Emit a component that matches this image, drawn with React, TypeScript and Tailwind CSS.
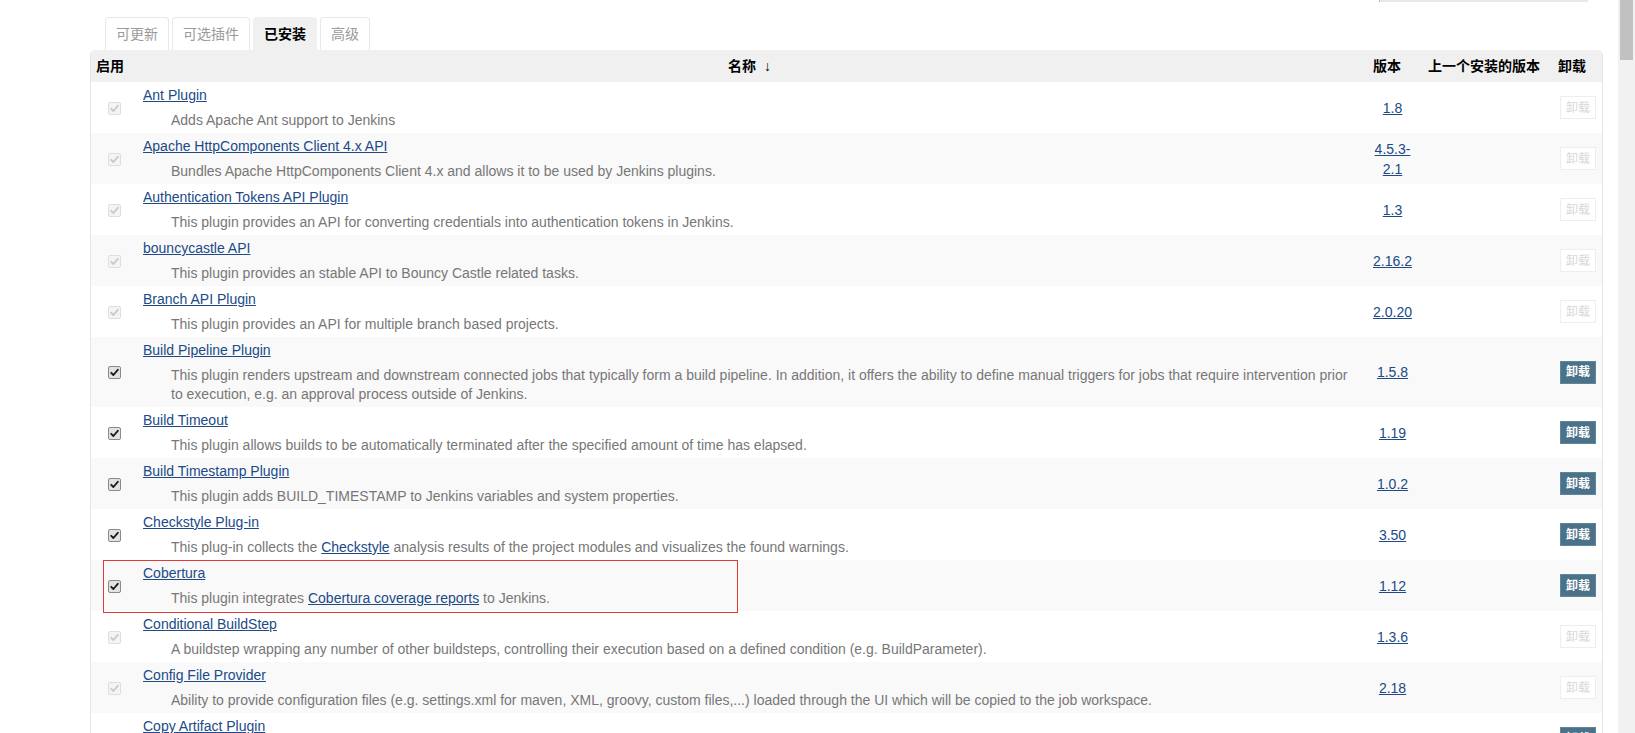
import React from "react";

type Plugin = {
  name: string;
  desc: React.ReactNode;
  version: string;
  active: boolean;
  marked?: boolean;
};

const Lnk = ({ children }: { children: React.ReactNode }) => (
  <a href="#" className="text-[#204a87] underline">
    {children}
  </a>
);

const plugins: Plugin[] = [
  { name: "Ant Plugin", desc: "Adds Apache Ant support to Jenkins", version: "1.8", active: false },
  {
    name: "Apache HttpComponents Client 4.x API",
    desc: "Bundles Apache HttpComponents Client 4.x and allows it to be used by Jenkins plugins.",
    version: "4.5.3-2.1",
    active: false,
  },
  {
    name: "Authentication Tokens API Plugin",
    desc: "This plugin provides an API for converting credentials into authentication tokens in Jenkins.",
    version: "1.3",
    active: false,
  },
  {
    name: "bouncycastle API",
    desc: "This plugin provides an stable API to Bouncy Castle related tasks.",
    version: "2.16.2",
    active: false,
  },
  {
    name: "Branch API Plugin",
    desc: "This plugin provides an API for multiple branch based projects.",
    version: "2.0.20",
    active: false,
  },
  {
    name: "Build Pipeline Plugin",
    desc: "This plugin renders upstream and downstream connected jobs that typically form a build pipeline. In addition, it offers the ability to define manual triggers for jobs that require intervention prior to execution, e.g. an approval process outside of Jenkins.",
    version: "1.5.8",
    active: true,
  },
  {
    name: "Build Timeout",
    desc: "This plugin allows builds to be automatically terminated after the specified amount of time has elapsed.",
    version: "1.19",
    active: true,
  },
  {
    name: "Build Timestamp Plugin",
    desc: "This plugin adds BUILD_TIMESTAMP to Jenkins variables and system properties.",
    version: "1.0.2",
    active: true,
  },
  {
    name: "Checkstyle Plug-in",
    desc: (
      <>
        This plug-in collects the <Lnk>Checkstyle</Lnk> analysis results of the project modules and visualizes the found warnings.
      </>
    ),
    version: "3.50",
    active: true,
  },
  {
    name: "Cobertura",
    desc: (
      <>
        This plugin integrates <Lnk>Cobertura coverage reports</Lnk> to Jenkins.
      </>
    ),
    version: "1.12",
    active: true,
    marked: true,
  },
  {
    name: "Conditional BuildStep",
    desc: "A buildstep wrapping any number of other buildsteps, controlling their execution based on a defined condition (e.g. BuildParameter).",
    version: "1.3.6",
    active: false,
  },
  {
    name: "Config File Provider",
    desc: "Ability to provide configuration files (e.g. settings.xml for maven, XML, groovy, custom files,...) loaded through the UI which will be copied to the job workspace.",
    version: "2.18",
    active: false,
  },
  {
    name: "Copy Artifact Plugin",
    desc: "Adds a build step to copy artifacts from another project.",
    version: "1.39",
    active: true,
  },
];

function CheckBox({ active }: { active: boolean }) {
  return (
    <span
      className={`inline-flex w-[13px] h-[13px] items-center justify-center rounded-[2px] border align-middle ${
        active ? "border-[#8a8a8a] bg-[#e2e2e2]" : "border-[#dedede] bg-[#f4f4f4]"
      }`}
    >
      <svg width="9" height="9" viewBox="0 0 9 9">
        <path
          d="M1.2 4.8 L3.4 7 L7.8 1.8"
          fill="none"
          stroke={active ? "#1a1a1a" : "#c9c9c9"}
          strokeWidth="1.8"
          strokeLinecap="round"
          strokeLinejoin="round"
        />
      </svg>
    </span>
  );
}

function UninstallButton({ active }: { active: boolean }) {
  return (
    <span
      className={`inline-flex w-[36px] h-[23px] items-center justify-center border text-[12px] align-middle ${
        active ? "bg-[#4b7288] border-[#5f879c] text-white font-bold" : "bg-white border-[#eeeeee] text-[#d8d8d8]"
      }`}
    >
      卸载
    </span>
  );
}

const tabs = ["可更新", "可选插件", "已安装", "高级"];

export default function App() {
  return (
    <div className="flex h-screen w-full overflow-hidden bg-white text-[14px] text-black font-['Liberation_Sans',Arial,'Noto_Sans_CJK_SC',sans-serif]">
      <div className="flex-1 min-w-0">
        {/* bottom edge of the filter box, scrolled off */}
        <div className="flex justify-end pr-[30px]">
          <div className="w-[209px] h-[2px] bg-[#e8e8e8] border-l border-[#bdbdbd]" />
        </div>

        <div className="flex gap-[3px] pl-[105px] mt-[15px]">
          {tabs.map((t, i) => (
            <div
              key={t}
              className={`h-[33px] px-[10px] flex items-center rounded-t-[4px] border border-b-0 ${
                i === 2 ? "bg-[#f0f0f0] border-[#f0f0f0] font-bold text-black" : "bg-white border-[#e8e8e8] text-[#9a9a9a]"
              }`}
            >
              {t}
            </div>
          ))}
        </div>

        <div className="ml-[90px] w-[1513px] border-x border-[#e6e6e6] rounded-t-[5px] overflow-hidden">
          <table className="table-fixed w-full border-collapse">
            <colgroup>
              <col className="w-[46px]" />
              <col className="w-[1225px]" />
              <col className="w-[61px]" />
              <col className="w-[129px]" />
              <col className="w-[50px]" />
            </colgroup>
            <thead>
              <tr className="bg-[#f0f0f0] h-[32px] font-bold">
                <th className="text-left pl-[5px] font-bold">启用</th>
                <th className="text-center font-bold">
                  名称<span className="font-normal">{"\u00a0\u00a0"}↓</span>
                </th>
                <th className="text-left pl-[11px] font-bold">版本</th>
                <th className="text-left pl-[5px] font-bold whitespace-nowrap">上一个安装的版本</th>
                <th className="text-left pl-[6px] font-bold">卸载</th>
              </tr>
            </thead>
            <tbody>
              {plugins.map((p, i) => (
                <tr key={p.name} className={i % 2 === 1 ? "bg-[#f9f9f9]" : "bg-white"}>
                  <td className="relative text-center align-middle">
                    <CheckBox active={p.active} />
                    {p.marked && (
                      <div className="absolute left-[12px] top-0 w-[635px] h-[53px] border border-[#e53935] pointer-events-none" />
                    )}
                  </td>
                  <td className="align-top pl-[6px] pr-[4px] pt-[4px] pb-[3px]">
                    <div className="leading-[18px]">
                      <Lnk>{p.name}</Lnk>
                    </div>
                    <div className="mt-[7px] pl-[28px] leading-[19px] text-[#777777]">{p.desc}</div>
                  </td>
                  <td className="align-middle text-center px-[4px] leading-[20px]">
                    <Lnk>{p.version}</Lnk>
                  </td>
                  <td />
                  <td className="align-middle text-right pr-[6px]">
                    <UninstallButton active={p.active} />
                  </td>
                </tr>
              ))}
            </tbody>
          </table>
        </div>
      </div>

      <div className="w-[17px] shrink-0 bg-[#f1f1f1] pt-0">
        <div className="mx-[2px] h-[60px] bg-[#c1c1c1]" />
      </div>
    </div>
  );
}
